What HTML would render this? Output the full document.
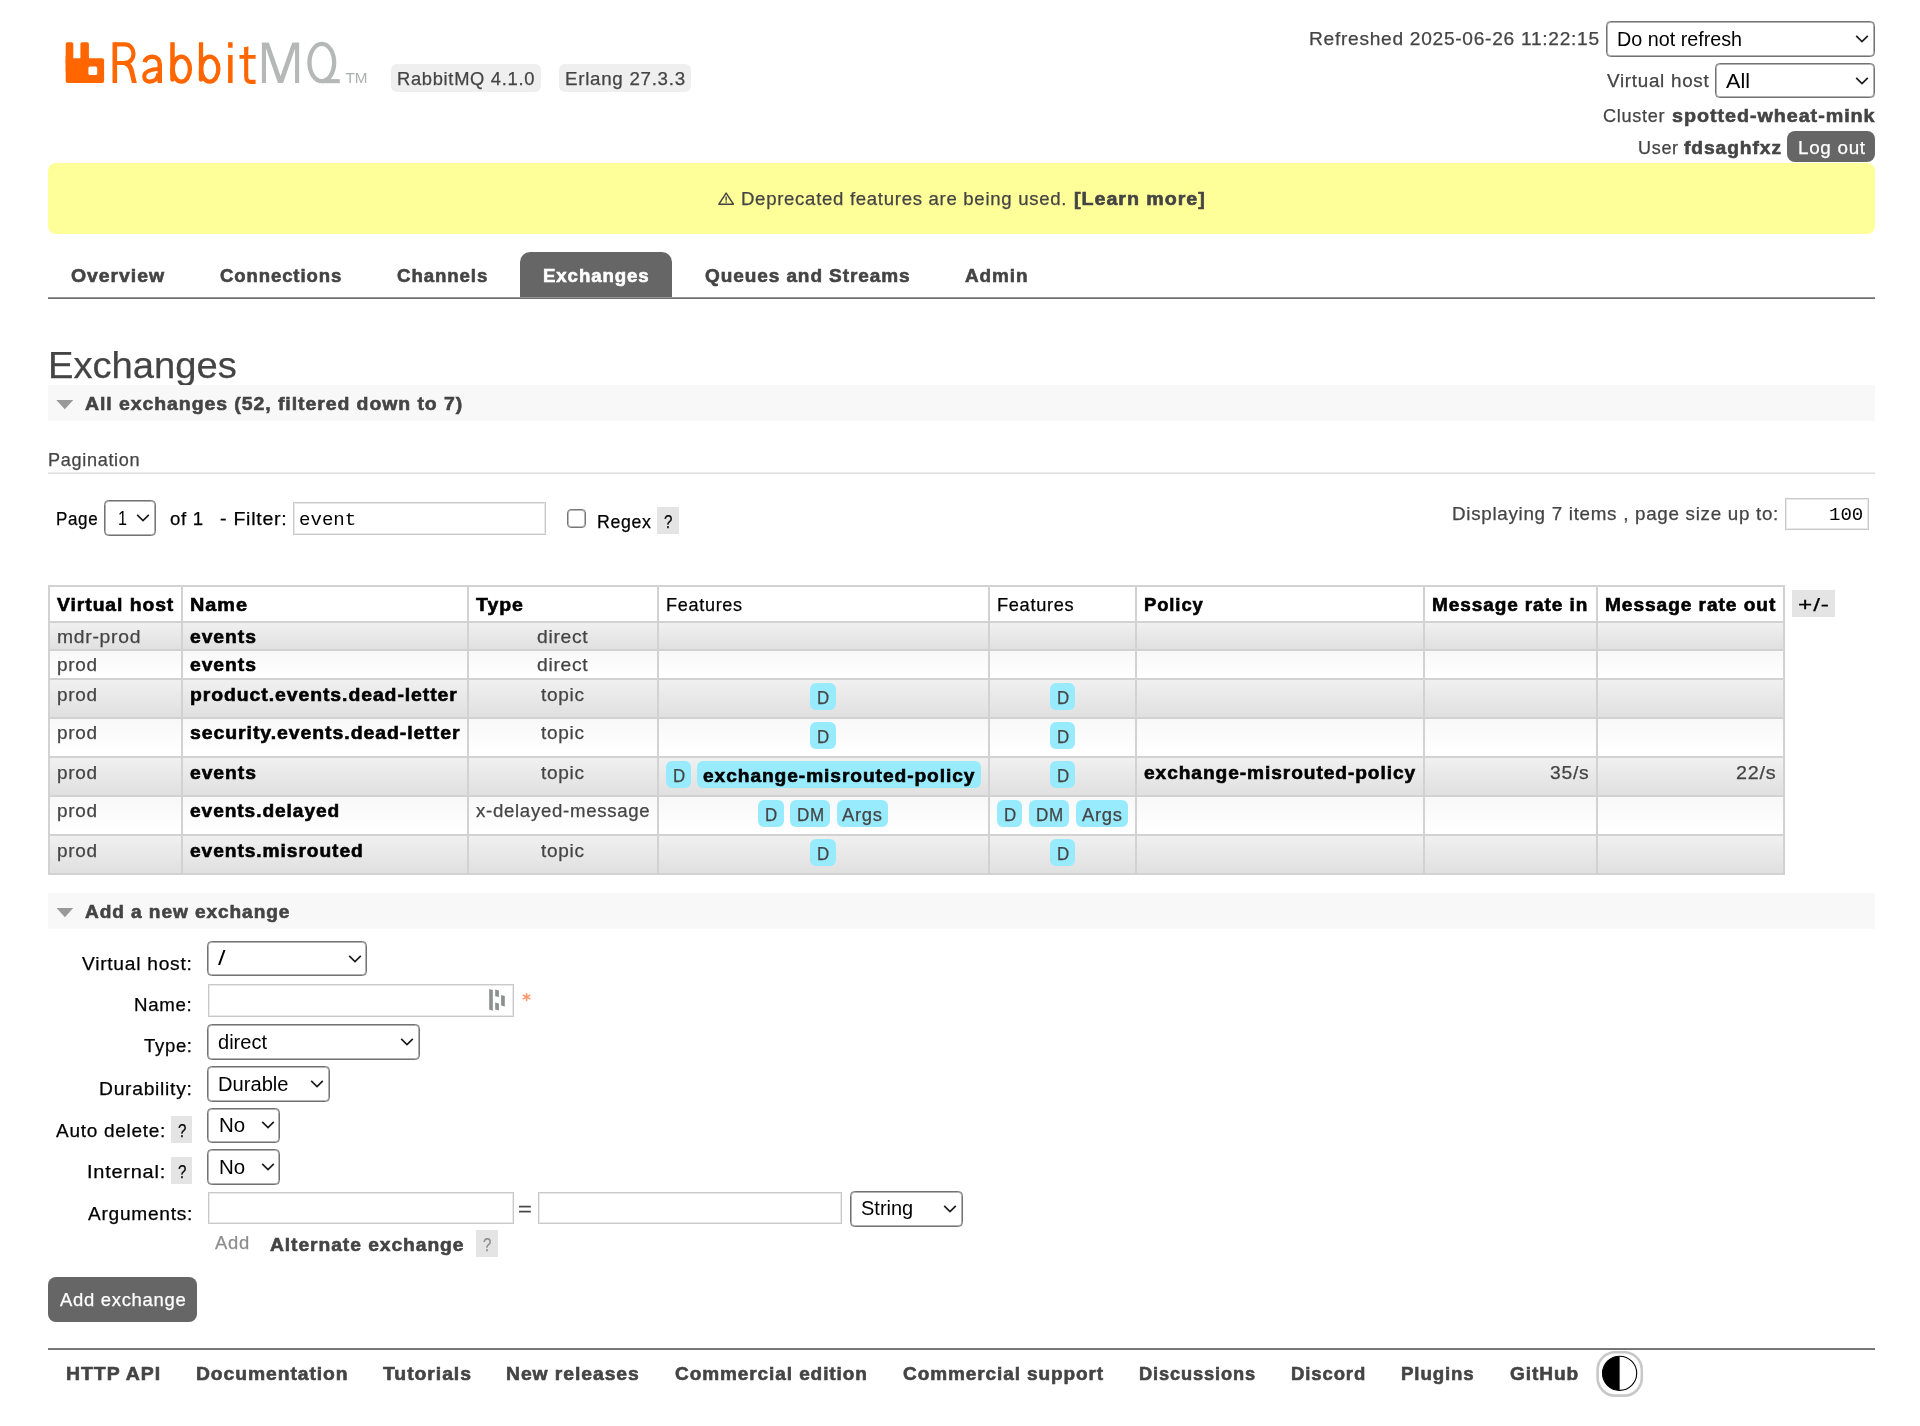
<!DOCTYPE html>
<html lang="en"><head><meta charset="utf-8"><title>RabbitMQ Management</title>
<style>
html,body{margin:0;padding:0;background:#fff}
body{width:1920px;height:1426px;position:relative;overflow:hidden;font-family:"Liberation Sans",sans-serif;color:#444;font-size:18.5px}
#outer{position:absolute;left:0;top:0;width:1920px;height:1426px;will-change:transform}
.abs,.t{position:absolute}
.abs{box-sizing:border-box}
.t{white-space:pre;line-height:1;transform-origin:0 0;font-weight:normal;-webkit-text-stroke:0.25px}
.b{font-weight:bold;-webkit-text-stroke:0.6px}
.m{font-family:"Liberation Mono",monospace;-webkit-text-stroke:0}
.ns{-webkit-text-stroke:0}
.ver{background:#efefef;border-radius:6px}
.sel{background:#fff;border:1px solid #737373;box-shadow:inset 0 0 0 1px rgba(115,115,115,.55);border-radius:4.5px}
.btn{background:#666;border-radius:8px}
.warn{background:#ff9;border-radius:8px}
.tabsel{background:#666;border-radius:10px 10px 0 0}
.sech{background:#f8f8f8}
.inp{background:#fff;border:1px solid #c9c9c9;box-shadow:inset 0 0 0 1px rgba(201,201,201,.4)}
.chk{background:#fff;border:1px solid #767676;box-shadow:inset 0 0 0 1px rgba(118,118,118,.5);border-radius:4px}
.help{background:#e4e4e4}
.feat{background:#98ebfd;border-radius:6px;text-decoration:none}
table.list{border-collapse:collapse;table-layout:fixed;border-spacing:0}
table.list th,table.list td{border:2px solid #d2d2d2;padding:0;background:#fff}
table.list tr.alt1 td{background:linear-gradient(#f0f0f0,#e0e0e0)}
table.list tr.alt2 td{background:linear-gradient(#f8f8f8,#fff)}
</style></head>
<body>
<div id="outer">
<div id="header">
<svg id="logo" class="abs" style="left:0;top:0" width="400" height="110" viewBox="0 0 400 110"><g fill="#f60"><rect x="65.7" y="42.3" width="7.6" height="30" rx="1.6"/><rect x="80.4" y="42.3" width="8.5" height="30" rx="1.6"/><rect x="65.7" y="58.2" width="38.4" height="24.8" rx="2"/><rect x="65.7" y="56" width="3" height="6"/><rect x="85.9" y="56" width="3" height="6"/></g><rect x="88.4" y="66.4" width="8.8" height="8.7" rx="1.6" fill="#fff"/><g fill="none" stroke="#f60" stroke-linecap="butt"><path d="M114.8 42.25V83" stroke-width="4.6"/><path d="M114.8 44.3H125.2A8.3 9.35 0 0 1 125.2 63H114.8" stroke-width="4.2"/><path d="M124.5 63C128 63.4 130 66 131.3 70L134.5 83.6" stroke-width="4.8" clip-path="url(#cb)"/><path d="M144.7 62.2C145.4 58.6 148.6 56.7 152.2 56.7C157 56.7 159.75 59.6 159.75 64.5V83" stroke-width="4.5"/><path d="M159.75 68.7C153 69.4 144.2 70.2 144.2 76.6C144.2 80 146.8 81.6 149.8 81.6C153.8 81.6 157.9 79.3 158.3 73.5" stroke-width="4.1"/><path d="M172.5 42.25V75" stroke-width="4.5"/><path d="M172.5 70V79.6" stroke-width="4.5" stroke-linecap="round"/><ellipse cx="181.35" cy="69.1" rx="8.6" ry="12.5" stroke-width="4.3"/><path d="M201 42.25V75" stroke-width="4.3"/><path d="M201 70V79.6" stroke-width="4.3" stroke-linecap="round"/><ellipse cx="209.75" cy="69.1" rx="8.6" ry="12.5" stroke-width="4.3"/><path d="M246.2 47V76.5C246.2 80.5 248 81.9 251 81.9H255.6" stroke-width="4.1"/></g><g fill="#f60"><rect x="228.1" y="55" width="4.5" height="28"/><rect x="228.1" y="42.25" width="4.5" height="5.5"/><rect x="239.5" y="55" width="16.1" height="3.75"/><path d="M244.15 48.6L248.25 46.1V50H244.15Z"/></g><clipPath id="cb"><rect x="100" y="42.5" width="260" height="40.45"/></clipPath><g fill="none" stroke="#b5b8b7" clip-path="url(#cb)"><path d="M263.95 42V84M297.1 42V84" stroke-width="4.1"/><path d="M266.4 42.6L280.8 84M294.7 42.6L280.3 84" stroke-width="4.7"/></g><ellipse cx="321.8" cy="62.55" rx="12.35" ry="18.6" fill="none" stroke="#b5b8b7" stroke-width="4.3"/><rect x="322" y="79.1" width="17.75" height="4.1" fill="#b5b8b7"/><text id="lg3" x="345.5" y="83.1" font-family="Liberation Sans, sans-serif" font-size="14.3" fill="#aab0b0" textLength="22" lengthAdjust="spacingAndGlyphs">TM</text></svg>
<div class="abs ver" style="left:390.80px;top:64.20px;width:150.00px;height:27.50px;"></div>
<span class="t" style="left:397.10px;top:70px;font-size:18.5px;letter-spacing:0.7px;transform:scaleX(0.9908);">RabbitMQ 4.1.0</span>
<div class="abs ver" style="left:558.70px;top:64.20px;width:132.10px;height:27.50px;"></div>
<span class="t" style="left:564.90px;top:70px;font-size:18.5px;letter-spacing:0.7px;transform:scaleX(1.0139);">Erlang 27.3.3</span>
<div id="login-details">
<span class="t" style="left:1309.00px;top:30px;font-size:18.5px;letter-spacing:0.7px;transform:scaleX(1.0340);">Refreshed 2025-06-26 11:22:15</span>
<div class="abs sel" style="left:1606.00px;top:21.00px;width:269.00px;height:36.00px;"></div><svg class="abs" style="left:1854.30px;top:32.90px" width="16" height="12" viewBox="0 0 16 12"><path d="M2.2 2.9 L8 8.6 L13.8 2.9" fill="none" stroke="#1a1a1a" stroke-width="1.65" stroke-linecap="butt" stroke-linejoin="miter"/></svg><span class="t ns" style="left:1616.50px;top:30px;font-size:19.5px;transform:scaleX(1.0124);color:#000;">Do not refresh</span>
<span class="t" style="left:1606.60px;top:72px;font-size:18.5px;letter-spacing:0.7px;transform:scaleX(1.0178);">Virtual host</span>
<div class="abs sel" style="left:1715.00px;top:63.00px;width:160.00px;height:35.00px;"></div><svg class="abs" style="left:1854.30px;top:74.50px" width="16" height="12" viewBox="0 0 16 12"><path d="M2.2 2.9 L8 8.6 L13.8 2.9" fill="none" stroke="#1a1a1a" stroke-width="1.65" stroke-linecap="butt" stroke-linejoin="miter"/></svg><span class="t ns" style="left:1725.50px;top:72px;font-size:19.5px;transform:scaleX(1.1074);color:#000;">All</span>
<span class="t" style="left:1603.35px;top:107px;font-size:18.5px;letter-spacing:0.7px;transform:scaleX(0.9785);">Cluster</span>
<span class="t b" style="left:1671.80px;top:107px;font-size:18.5px;letter-spacing:0.9px;transform:scaleX(1.0661);">spotted-wheat-mink</span>
<span class="t" style="left:1638.00px;top:139px;font-size:18.5px;letter-spacing:0.7px;transform:scaleX(0.9739);">User</span>
<span class="t b" style="left:1684.00px;top:139px;font-size:18.5px;letter-spacing:0.9px;transform:scaleX(1.0368);">fdsaghfxz</span>
<div class="abs btn" style="left:1787.20px;top:131.30px;width:87.80px;height:30.40px;"></div>
<span class="t" style="left:1798.20px;top:139px;font-size:18.5px;letter-spacing:0.7px;transform:scaleX(1.0178);color:#fff;">Log out</span>
</div>
</div>
<div class="abs warn" style="left:48.00px;top:163.30px;width:1827.20px;height:70.45px;"></div>
<svg class="abs" style="left:716px;top:190px" width="20" height="17" viewBox="0 0 20 17"><path d="M10.15 3.1 L17.4 14.2 L2.9 14.2 Z" fill="none" stroke="#444" stroke-width="1.5" stroke-linejoin="round"/><rect x="9.45" y="6.6" width="1.4" height="4" fill="#444"/><rect x="9.45" y="11.4" width="1.4" height="1.4" fill="#444"/></svg>
<span class="t" style="left:740.80px;top:190px;font-size:18.5px;letter-spacing:0.7px;transform:scaleX(1.0040);">Deprecated features are being used.</span>
<span class="t b" style="left:1073.80px;top:190px;font-size:18.5px;letter-spacing:0.9px;transform:scaleX(1.0635);">[Learn more]</span>
<div id="menu">
<div class="abs tabsel" style="left:520.20px;top:252.00px;width:151.60px;height:47.00px;"></div>
<div class="abs" style="left:48.00px;top:297.00px;width:1827.00px;height:2.00px;background:linear-gradient(#959595 0 1px,#6f6f6f 1px 2px)"></div>
<span class="t b" style="left:71.40px;top:267px;font-size:18.5px;letter-spacing:0.9px;transform:scaleX(1.0498);">Overview</span>
<span class="t b" style="left:220.30px;top:267px;font-size:18.5px;letter-spacing:0.9px;transform:scaleX(1.0013);">Connections</span>
<span class="t b" style="left:397.30px;top:267px;font-size:18.5px;letter-spacing:0.9px;transform:scaleX(1.0082);">Channels</span>
<span class="t b" style="left:543.40px;top:267px;font-size:18.5px;letter-spacing:0.9px;transform:scaleX(1.0077);color:#fff;">Exchanges</span>
<span class="t b" style="left:704.70px;top:267px;font-size:18.5px;letter-spacing:0.9px;transform:scaleX(1.0263);">Queues and Streams</span>
<span class="t b" style="left:965.30px;top:267px;font-size:18.5px;letter-spacing:0.9px;transform:scaleX(1.0219);">Admin</span>
</div>
<div id="main">
<span class="t h1" style="left:47.70px;top:347px;font-size:37px;transform:scaleX(1.0315);color:#444;">Exchanges</span>
<div class="abs sech" style="left:48.00px;top:385.00px;width:1827.00px;height:35.75px;"></div>
<svg class="abs" style="left:55px;top:398px" width="20" height="13" viewBox="0 0 20 13"><path d="M1.3 2 L18.3 2 L9.8 11.2 Z" fill="#999"/></svg>
<span class="t b" style="left:85.30px;top:395px;font-size:18.5px;letter-spacing:0.9px;transform:scaleX(1.0502);">All exchanges (52, filtered down to 7)</span>
<span class="t" style="left:47.90px;top:451px;font-size:18.5px;letter-spacing:0.7px;transform:scaleX(0.9772);">Pagination</span>
<div class="abs" style="left:48.00px;top:472.00px;width:1827.00px;height:2.00px;background:linear-gradient(#ececec 0 1px,#e0e0e0 1px 2px)"></div>
<span class="t" style="left:56.10px;top:510px;font-size:18.5px;letter-spacing:0.7px;transform:scaleX(0.9180);color:#000;">Page</span>
<div class="abs sel" style="left:104.00px;top:500.00px;width:52.00px;height:36.00px;"></div><svg class="abs" style="left:135.00px;top:512.35px" width="16" height="12" viewBox="0 0 16 12"><path d="M2.2 2.9 L8 8.6 L13.8 2.9" fill="none" stroke="#1a1a1a" stroke-width="1.65" stroke-linecap="butt" stroke-linejoin="miter"/></svg><span class="t ns" style="left:118.00px;top:509px;font-size:19.5px;transform:scaleX(0.8288);color:#000;">1</span>
<span class="t" style="left:170.20px;top:510px;font-size:18.5px;letter-spacing:0.7px;transform:scaleX(1.0039);color:#000;">of 1</span>
<span class="t" style="left:219.70px;top:510px;font-size:18.5px;letter-spacing:0.7px;transform:scaleX(1.0576);color:#000;">- Filter:</span>
<div class="abs inp" style="left:293.00px;top:502.00px;width:253.00px;height:33.00px;"></div>
<span class="t m" style="left:298.70px;top:512px;font-size:18.5px;transform:scaleX(1.0321);color:#000;">event</span>
<div class="abs chk" style="left:567.00px;top:509.00px;width:19.00px;height:19.00px;"></div>
<span class="t" style="left:596.50px;top:513px;font-size:18.5px;letter-spacing:0.7px;transform:scaleX(0.9594);color:#000;">Regex</span>
<div class="abs help" style="left:657.00px;top:507.30px;width:21.70px;height:26.90px;"></div>
<span class="t" style="left:663.80px;top:513px;font-size:18.5px;transform:scaleX(0.8158);color:#000;">?</span>
<span class="t" style="left:1451.60px;top:505px;font-size:18.5px;letter-spacing:0.7px;transform:scaleX(1.0154);">Displaying 7 items , page size up to:</span>
<div class="abs inp" style="left:1785.00px;top:498.00px;width:84.00px;height:32.00px;"></div>
<span class="t m" style="left:1829.20px;top:507px;font-size:18.5px;transform:scaleX(1.0296);color:#000;">100</span>
<div class="abs" style="left:0;top:0;width:1920px;height:0">
<table class="list" style="margin:585px 0 0 48px;width:1737px">
<colgroup><col style="width:133px"><col style="width:286px"><col style="width:190px"><col style="width:331px"><col style="width:147px"><col style="width:288px"><col style="width:173px"><col style="width:187px"></colgroup>
<thead><tr style="height:36px">
<th><span class="t b" style="left:57.00px;top:596px;font-size:18.5px;letter-spacing:0.9px;transform:scaleX(1.0446);color:#000;">Virtual host</span></th>
<th><span class="t b" style="left:189.70px;top:596px;font-size:18.5px;letter-spacing:0.9px;transform:scaleX(1.0734);color:#000;">Name</span></th>
<th><span class="t b" style="left:476.40px;top:596px;font-size:18.5px;letter-spacing:0.9px;transform:scaleX(1.0538);color:#000;">Type</span></th>
<th><span class="t" style="left:665.70px;top:596px;font-size:18.5px;letter-spacing:0.7px;transform:scaleX(0.9768);color:#000;">Features</span></th>
<th><span class="t" style="left:997.20px;top:596px;font-size:18.5px;letter-spacing:0.7px;transform:scaleX(0.9832);color:#000;">Features</span></th>
<th><span class="t b" style="left:1143.70px;top:596px;font-size:18.5px;letter-spacing:0.9px;transform:scaleX(0.9965);color:#000;">Policy</span></th>
<th><span class="t b" style="left:1432.20px;top:596px;font-size:18.5px;letter-spacing:0.9px;transform:scaleX(1.0256);color:#000;">Message rate in</span></th>
<th><span class="t b" style="left:1605.20px;top:596px;font-size:18.5px;letter-spacing:0.9px;transform:scaleX(1.0343);color:#000;">Message rate out</span></th>
</tr></thead><tbody>
<tr class="alt1" style="height:28px">
<td><span class="t" style="left:56.90px;top:628px;font-size:18.5px;letter-spacing:0.7px;transform:scaleX(1.0431);">mdr-prod</span></td>
<td><span class="t b" style="left:189.80px;top:628px;font-size:18.5px;letter-spacing:0.9px;transform:scaleX(1.0439);color:#000;">events</span></td>
<td class="c"><span class="t" style="left:537.30px;top:628px;font-size:18.5px;letter-spacing:0.7px;transform:scaleX(1.0399);">direct</span></td>
<td class="c"></td>
<td class="c"></td>
<td></td>
<td class="r"></td>
<td class="r"></td>
</tr>
<tr class="alt2" style="height:29px">
<td><span class="t" style="left:56.90px;top:656px;font-size:18.5px;letter-spacing:0.7px;transform:scaleX(1.0248);">prod</span></td>
<td><span class="t b" style="left:189.80px;top:656px;font-size:18.5px;letter-spacing:0.9px;transform:scaleX(1.0439);color:#000;">events</span></td>
<td class="c"><span class="t" style="left:537.30px;top:656px;font-size:18.5px;letter-spacing:0.7px;transform:scaleX(1.0399);">direct</span></td>
<td class="c"></td>
<td class="c"></td>
<td></td>
<td class="r"></td>
<td class="r"></td>
</tr>
<tr class="alt1" style="height:39px">
<td><span class="t" style="left:56.90px;top:686px;font-size:18.5px;letter-spacing:0.7px;transform:scaleX(1.0248);">prod</span></td>
<td><span class="t b" style="left:189.80px;top:686px;font-size:18.5px;letter-spacing:0.9px;transform:scaleX(1.0473);color:#000;">product.events.dead-letter</span></td>
<td class="c"><span class="t" style="left:541.30px;top:686px;font-size:18.5px;letter-spacing:0.7px;transform:scaleX(1.0268);">topic</span></td>
<td class="c"><abbr class="abs feat" style="left:810.40px;top:683.00px;width:25.40px;height:27.20px;"></abbr><span class="t" style="left:817.30px;top:689px;font-size:18.5px;transform:scaleX(0.9121);color:#444;">D</span></td>
<td class="c"><abbr class="abs feat" style="left:1049.70px;top:683.00px;width:25.40px;height:27.20px;"></abbr><span class="t" style="left:1056.60px;top:689px;font-size:18.5px;transform:scaleX(0.9121);color:#444;">D</span></td>
<td></td>
<td class="r"></td>
<td class="r"></td>
</tr>
<tr class="alt2" style="height:39px">
<td><span class="t" style="left:56.90px;top:724px;font-size:18.5px;letter-spacing:0.7px;transform:scaleX(1.0248);">prod</span></td>
<td><span class="t b" style="left:189.80px;top:724px;font-size:18.5px;letter-spacing:0.9px;transform:scaleX(1.0508);color:#000;">security.events.dead-letter</span></td>
<td class="c"><span class="t" style="left:541.30px;top:724px;font-size:18.5px;letter-spacing:0.7px;transform:scaleX(1.0268);">topic</span></td>
<td class="c"><abbr class="abs feat" style="left:810.40px;top:722.00px;width:25.40px;height:27.20px;"></abbr><span class="t" style="left:817.30px;top:728px;font-size:18.5px;transform:scaleX(0.9121);color:#444;">D</span></td>
<td class="c"><abbr class="abs feat" style="left:1049.70px;top:722.00px;width:25.40px;height:27.20px;"></abbr><span class="t" style="left:1056.60px;top:728px;font-size:18.5px;transform:scaleX(0.9121);color:#444;">D</span></td>
<td></td>
<td class="r"></td>
<td class="r"></td>
</tr>
<tr class="alt1" style="height:39px">
<td><span class="t" style="left:56.90px;top:764px;font-size:18.5px;letter-spacing:0.7px;transform:scaleX(1.0248);">prod</span></td>
<td><span class="t b" style="left:189.80px;top:764px;font-size:18.5px;letter-spacing:0.9px;transform:scaleX(1.0439);color:#000;">events</span></td>
<td class="c"><span class="t" style="left:541.30px;top:764px;font-size:18.5px;letter-spacing:0.7px;transform:scaleX(1.0268);">topic</span></td>
<td class="c"><abbr class="abs feat" style="left:665.60px;top:761.00px;width:25.40px;height:27.20px;"></abbr><span class="t" style="left:672.50px;top:767px;font-size:18.5px;transform:scaleX(0.9121);color:#444;">D</span><abbr class="abs feat" style="left:697.40px;top:761.00px;width:283.30px;height:27.20px;"></abbr><span class="t b" style="left:703.20px;top:767px;font-size:18.5px;letter-spacing:0.9px;transform:scaleX(1.0356);color:#000;">exchange-misrouted-policy</span></td>
<td class="c"><abbr class="abs feat" style="left:1049.70px;top:761.00px;width:25.40px;height:27.20px;"></abbr><span class="t" style="left:1056.60px;top:767px;font-size:18.5px;transform:scaleX(0.9121);color:#444;">D</span></td>
<td><span class="t b" style="left:1143.80px;top:764px;font-size:18.5px;letter-spacing:0.9px;transform:scaleX(1.0345);color:#000;">exchange-misrouted-policy</span></td>
<td class="r"><span class="t" style="left:1549.70px;top:764px;font-size:18.5px;letter-spacing:0.7px;transform:scaleX(1.0410);">35/s</span></td>
<td class="r"><span class="t" style="left:1735.70px;top:764px;font-size:18.5px;letter-spacing:0.7px;transform:scaleX(1.0679);">22/s</span></td>
</tr>
<tr class="alt2" style="height:39px">
<td><span class="t" style="left:56.90px;top:802px;font-size:18.5px;letter-spacing:0.7px;transform:scaleX(1.0248);">prod</span></td>
<td><span class="t b" style="left:189.80px;top:802px;font-size:18.5px;letter-spacing:0.9px;transform:scaleX(1.0335);color:#000;">events.delayed</span></td>
<td class="c"><span class="t" style="left:475.60px;top:802px;font-size:18.5px;letter-spacing:0.7px;transform:scaleX(1.0061);">x-delayed-message</span></td>
<td class="c"><abbr class="abs feat" style="left:758.20px;top:800.00px;width:25.40px;height:27.20px;"></abbr><span class="t" style="left:765.10px;top:806px;font-size:18.5px;transform:scaleX(0.9121);color:#444;">D</span><abbr class="abs feat" style="left:790.10px;top:800.00px;width:40.00px;height:27.20px;"></abbr><span class="t" style="left:796.70px;top:806px;font-size:18.5px;letter-spacing:0.7px;transform:scaleX(0.9195);color:#444;">DM</span><abbr class="abs feat" style="left:836.70px;top:800.00px;width:51.40px;height:27.20px;"></abbr><span class="t" style="left:842.30px;top:806px;font-size:18.5px;letter-spacing:0.7px;transform:scaleX(0.9964);color:#444;">Args</span></td>
<td class="c"><abbr class="abs feat" style="left:997.10px;top:800.00px;width:25.40px;height:27.20px;"></abbr><span class="t" style="left:1004.00px;top:806px;font-size:18.5px;transform:scaleX(0.9121);color:#444;">D</span><abbr class="abs feat" style="left:1028.90px;top:800.00px;width:40.00px;height:27.20px;"></abbr><span class="t" style="left:1035.50px;top:806px;font-size:18.5px;letter-spacing:0.7px;transform:scaleX(0.9195);color:#444;">DM</span><abbr class="abs feat" style="left:1076.30px;top:800.00px;width:51.40px;height:27.20px;"></abbr><span class="t" style="left:1081.90px;top:806px;font-size:18.5px;letter-spacing:0.7px;transform:scaleX(0.9964);color:#444;">Args</span></td>
<td></td>
<td class="r"></td>
<td class="r"></td>
</tr>
<tr class="alt1" style="height:39px">
<td><span class="t" style="left:56.90px;top:842px;font-size:18.5px;letter-spacing:0.7px;transform:scaleX(1.0248);">prod</span></td>
<td><span class="t b" style="left:189.80px;top:842px;font-size:18.5px;letter-spacing:0.9px;transform:scaleX(1.0360);color:#000;">events.misrouted</span></td>
<td class="c"><span class="t" style="left:541.30px;top:842px;font-size:18.5px;letter-spacing:0.7px;transform:scaleX(1.0268);">topic</span></td>
<td class="c"><abbr class="abs feat" style="left:810.40px;top:839.00px;width:25.40px;height:27.20px;"></abbr><span class="t" style="left:817.30px;top:845px;font-size:18.5px;transform:scaleX(0.9121);color:#444;">D</span></td>
<td class="c"><abbr class="abs feat" style="left:1049.70px;top:839.00px;width:25.40px;height:27.20px;"></abbr><span class="t" style="left:1056.60px;top:845px;font-size:18.5px;transform:scaleX(0.9121);color:#444;">D</span></td>
<td></td>
<td class="r"></td>
<td class="r"></td>
</tr>
</tbody></table></div>
<div class="abs help" style="left:1791.50px;top:590.00px;width:43.00px;height:26.75px;"></div>
<span class="t" style="left:1797.75px;top:596px;font-size:18.5px;letter-spacing:0.7px;transform:scaleX(1.3160);color:#000;">+/-</span>
<div class="abs sech" style="left:48.00px;top:893.10px;width:1827.00px;height:35.80px;"></div>
<svg class="abs" style="left:55px;top:906px" width="20" height="13" viewBox="0 0 20 13"><path d="M1.6 2 L18.2 2 L9.9 11.2 Z" fill="#999"/></svg>
<span class="t b" style="left:85.30px;top:903px;font-size:18.5px;letter-spacing:0.9px;transform:scaleX(1.0307);">Add a new exchange</span>
<form>
<span class="t" style="left:82.30px;top:955px;font-size:18.5px;letter-spacing:0.7px;transform:scaleX(1.0383);color:#000;">Virtual host:</span>
<div class="abs sel" style="left:207.00px;top:941.00px;width:160.00px;height:35.00px;"></div><svg class="abs" style="left:346.70px;top:952.55px" width="16" height="12" viewBox="0 0 16 12"><path d="M2.2 2.9 L8 8.6 L13.8 2.9" fill="none" stroke="#1a1a1a" stroke-width="1.65" stroke-linecap="butt" stroke-linejoin="miter"/></svg><span class="t ns" style="left:218.00px;top:949px;font-size:19.5px;transform:scaleX(1.3833);color:#000;">/</span>
<span class="t" style="left:134.30px;top:996px;font-size:18.5px;letter-spacing:0.7px;transform:scaleX(1.0087);color:#000;">Name:</span>
<div class="abs inp" style="left:208.00px;top:984.00px;width:306.00px;height:33.00px;"></div>
<svg class="abs" style="left:480px;top:980px" width="60" height="40" viewBox="480 980 60 40"><g fill="#8c8f8e"><path d="M489.2 989.1L492.8 990V1010.8L489.2 1009.5Z"/><path d="M495.2 989.4L498.9 990.5V997L495.2 996.2Z"/><path d="M495.2 1002.5L498.9 1003.4V1010.5L495.2 1009.4Z"/><path d="M501.1 995L504.8 995.9V1006.6L501.1 1005.5Z"/></g><g stroke="#ff9466" stroke-width="1.5" fill="none"><path d="M526.55 992.9V1001.2M522.7 994.9L530.4 999.2M530.4 994.9L522.7 999.2"/></g></svg>
<span class="t" style="left:144.10px;top:1037px;font-size:18.5px;letter-spacing:0.7px;transform:scaleX(0.9990);color:#000;">Type:</span>
<div class="abs sel" style="left:207.00px;top:1024.00px;width:213.00px;height:36.00px;"></div><svg class="abs" style="left:399.30px;top:1035.70px" width="16" height="12" viewBox="0 0 16 12"><path d="M2.2 2.9 L8 8.6 L13.8 2.9" fill="none" stroke="#1a1a1a" stroke-width="1.65" stroke-linecap="butt" stroke-linejoin="miter"/></svg><span class="t ns" style="left:218.00px;top:1033px;font-size:19.5px;transform:scaleX(1.0275);color:#000;">direct</span>
<span class="t" style="left:99.20px;top:1080px;font-size:18.5px;letter-spacing:0.7px;transform:scaleX(1.0409);color:#000;">Durability:</span>
<div class="abs sel" style="left:207.00px;top:1066.00px;width:123.00px;height:36.00px;"></div><svg class="abs" style="left:309.30px;top:1077.95px" width="16" height="12" viewBox="0 0 16 12"><path d="M2.2 2.9 L8 8.6 L13.8 2.9" fill="none" stroke="#1a1a1a" stroke-width="1.65" stroke-linecap="butt" stroke-linejoin="miter"/></svg><span class="t ns" style="left:218.00px;top:1075px;font-size:19.5px;transform:scaleX(1.0323);color:#000;">Durable</span>
<span class="t" style="left:55.90px;top:1122px;font-size:18.5px;letter-spacing:0.7px;transform:scaleX(1.0267);color:#000;">Auto delete:</span>
<div class="abs help" style="left:171.40px;top:1116.20px;width:21.10px;height:26.60px;"></div>
<span class="t" style="left:177.80px;top:1122px;font-size:18.5px;transform:scaleX(0.8158);color:#000;">?</span>
<div class="abs sel" style="left:207.00px;top:1108.00px;width:73.00px;height:35.00px;"></div><svg class="abs" style="left:259.70px;top:1119.45px" width="16" height="12" viewBox="0 0 16 12"><path d="M2.2 2.9 L8 8.6 L13.8 2.9" fill="none" stroke="#1a1a1a" stroke-width="1.65" stroke-linecap="butt" stroke-linejoin="miter"/></svg><span class="t ns" style="left:218.60px;top:1116px;font-size:19.5px;transform:scaleX(1.0506);color:#000;">No</span>
<span class="t" style="left:87.00px;top:1163px;font-size:18.5px;letter-spacing:0.7px;transform:scaleX(1.0793);color:#000;">Internal:</span>
<div class="abs help" style="left:171.40px;top:1157.40px;width:21.10px;height:26.80px;"></div>
<span class="t" style="left:177.80px;top:1163px;font-size:18.5px;transform:scaleX(0.8158);color:#000;">?</span>
<div class="abs sel" style="left:207.00px;top:1149.00px;width:73.00px;height:36.00px;"></div><svg class="abs" style="left:259.70px;top:1161.10px" width="16" height="12" viewBox="0 0 16 12"><path d="M2.2 2.9 L8 8.6 L13.8 2.9" fill="none" stroke="#1a1a1a" stroke-width="1.65" stroke-linecap="butt" stroke-linejoin="miter"/></svg><span class="t ns" style="left:218.60px;top:1158px;font-size:19.5px;transform:scaleX(1.0506);color:#000;">No</span>
<span class="t" style="left:87.80px;top:1205px;font-size:18.5px;letter-spacing:0.7px;transform:scaleX(1.0336);color:#000;">Arguments:</span>
<div class="abs inp" style="left:208.00px;top:1192.00px;width:306.00px;height:32.00px;"></div>
<span class="t" style="left:518.20px;top:1200px;font-size:18.5px;transform:scaleX(1.2763);color:#444;">=</span>
<div class="abs inp" style="left:538.00px;top:1192.00px;width:304.00px;height:32.00px;"></div>
<div class="abs sel" style="left:850.00px;top:1191.00px;width:113.00px;height:36.00px;"></div><svg class="abs" style="left:942.30px;top:1202.92px" width="16" height="12" viewBox="0 0 16 12"><path d="M2.2 2.9 L8 8.6 L13.8 2.9" fill="none" stroke="#1a1a1a" stroke-width="1.65" stroke-linecap="butt" stroke-linejoin="miter"/></svg><span class="t ns" style="left:860.70px;top:1199px;font-size:19.5px;transform:scaleX(1.0245);color:#000;">String</span>
<span class="t" style="left:214.60px;top:1234px;font-size:18.5px;letter-spacing:0.7px;transform:scaleX(0.9962);color:#8c8c8c;">Add</span>
<span class="t b" style="left:270.00px;top:1236px;font-size:18.5px;letter-spacing:0.9px;transform:scaleX(1.0405);color:#444;">Alternate exchange</span>
<div class="abs help" style="left:476.00px;top:1230.00px;width:21.50px;height:27.30px;"></div>
<span class="t" style="left:482.60px;top:1236px;font-size:18.5px;transform:scaleX(0.8158);color:#8c8c8c;">?</span>
<div class="abs btn" style="left:48.00px;top:1276.50px;width:148.50px;height:45.00px;border-radius:8px"></div>
<span class="t" style="left:59.60px;top:1291px;font-size:18.5px;letter-spacing:0.7px;transform:scaleX(0.9976);color:#fff;">Add exchange</span>
</form>
</div>
<div id="footer">
<div class="abs" style="left:48.00px;top:1348.00px;width:1827.00px;height:2.00px;background:linear-gradient(#7c7c7c 0 1px,#717171 1px 2px)"></div>
<span class="t b" style="left:65.80px;top:1365px;font-size:18.5px;letter-spacing:0.9px;transform:scaleX(1.0517);">HTTP API</span>
<span class="t b" style="left:195.60px;top:1365px;font-size:18.5px;letter-spacing:0.9px;transform:scaleX(1.0423);">Documentation</span>
<span class="t b" style="left:382.80px;top:1365px;font-size:18.5px;letter-spacing:0.9px;transform:scaleX(1.0481);">Tutorials</span>
<span class="t b" style="left:506.40px;top:1365px;font-size:18.5px;letter-spacing:0.9px;transform:scaleX(1.0443);">New releases</span>
<span class="t b" style="left:674.80px;top:1365px;font-size:18.5px;letter-spacing:0.9px;transform:scaleX(1.0263);">Commercial edition</span>
<span class="t b" style="left:902.80px;top:1365px;font-size:18.5px;letter-spacing:0.9px;transform:scaleX(1.0256);">Commercial support</span>
<span class="t b" style="left:1138.80px;top:1365px;font-size:18.5px;letter-spacing:0.9px;transform:scaleX(0.9848);">Discussions</span>
<span class="t b" style="left:1290.80px;top:1365px;font-size:18.5px;letter-spacing:0.9px;transform:scaleX(0.9988);">Discord</span>
<span class="t b" style="left:1401.30px;top:1365px;font-size:18.5px;letter-spacing:0.9px;transform:scaleX(1.0066);">Plugins</span>
<span class="t b" style="left:1509.80px;top:1365px;font-size:18.5px;letter-spacing:0.9px;transform:scaleX(1.0308);">GitHub</span>
<svg class="abs" style="left:1594px;top:1348px" width="52" height="52" viewBox="0 0 52 52"><rect x="3.6" y="4.2" width="44.2" height="43.4" rx="17.5" fill="#fff" stroke="#c8c8c8" stroke-width="2.6"/><circle cx="25.6" cy="25.3" r="17.1" fill="#fff" stroke="#000" stroke-width="1.1"/><path d="M25.6 8.2 A17.1 17.1 0 0 0 25.6 42.4 Z" fill="#000"/></svg>
</div>
</div>
</body></html>
